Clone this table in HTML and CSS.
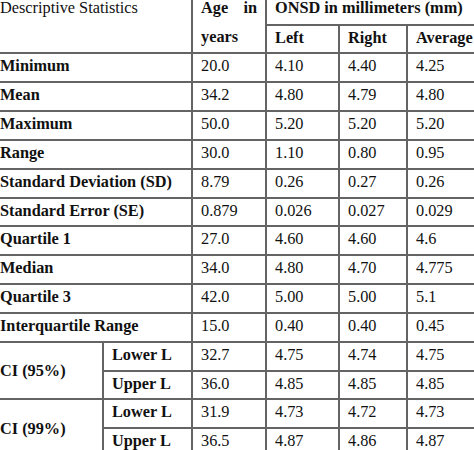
FILE: index.html
```html
<!DOCTYPE html>
<html lang="en">
<head>
<meta charset="utf-8">
<title>Descriptive Statistics</title>
<link rel="stylesheet" href="styles.css">
</head>
<body>
<table class="stats">
  <colgroup>
    <col class="c-label">
    <col class="c-sub">
    <col class="c-age">
    <col class="c-left">
    <col class="c-right">
    <col class="c-avg">
  </colgroup>
  <tr class="head1">
    <th colspan="2" rowspan="2" class="desc">Descriptive Statistics</th>
    <th rowspan="2" class="age"><div class="age-line">Age in</div><div class="age-years">years</div></th>
    <th colspan="3">ONSD in millimeters (mm)</th>
  </tr>
  <tr>
    <th>Left</th><th>Right</th><th>Average</th>
  </tr>
  <tr><th colspan="2">Minimum</th><td>20.0</td><td>4.10</td><td>4.40</td><td>4.25</td></tr>
  <tr><th colspan="2">Mean</th><td>34.2</td><td>4.80</td><td>4.79</td><td>4.80</td></tr>
  <tr><th colspan="2">Maximum</th><td>50.0</td><td>5.20</td><td>5.20</td><td>5.20</td></tr>
  <tr><th colspan="2">Range</th><td>30.0</td><td>1.10</td><td>0.80</td><td>0.95</td></tr>
  <tr><th colspan="2">Standard Deviation (SD)</th><td>8.79</td><td>0.26</td><td>0.27</td><td>0.26</td></tr>
  <tr><th colspan="2">Standard Error (SE)</th><td>0.879</td><td>0.026</td><td>0.027</td><td>0.029</td></tr>
  <tr><th colspan="2">Quartile 1</th><td>27.0</td><td>4.60</td><td>4.60</td><td>4.6</td></tr>
  <tr><th colspan="2">Median</th><td>34.0</td><td>4.80</td><td>4.70</td><td>4.775</td></tr>
  <tr><th colspan="2">Quartile 3</th><td>42.0</td><td>5.00</td><td>5.00</td><td>5.1</td></tr>
  <tr><th colspan="2">Interquartile Range</th><td>15.0</td><td>0.40</td><td>0.40</td><td>0.45</td></tr>
  <tr><th rowspan="2" class="ci">CI (95%)</th><th>Lower L</th><td>32.7</td><td>4.75</td><td>4.74</td><td>4.75</td></tr>
  <tr><th>Upper L</th><td>36.0</td><td>4.85</td><td>4.85</td><td>4.85</td></tr>
  <tr><th rowspan="2" class="ci">CI (99%)</th><th>Lower L</th><td>31.9</td><td>4.73</td><td>4.72</td><td>4.73</td></tr>
  <tr><th>Upper L</th><td>36.5</td><td>4.87</td><td>4.86</td><td>4.87</td></tr>
</table>
</body>
</html>
```

FILE: styles.css
```css
html, body {
  margin: 0;
  padding: 0;
  background: #ffffff;
  overflow: hidden;
}

.stats {
  border-collapse: collapse;
  table-layout: fixed;
  width: 508px;
  margin: -6px 0 0 -10px;
  font-family: "Liberation Serif", "Times New Roman", serif;
  font-size: 16.3px;
  line-height: 23px;
  color: #111111;
}

.c-label { width: 112px; }
.c-sub { width: 89px; }
.c-age { width: 74px; }
.c-left { width: 73px; }
.c-right { width: 68px; }
.c-avg { width: 92px; }

.stats th,
.stats td {
  border: 2px solid #646464;
  padding: 0 8px;
  text-align: left;
  vertical-align: top;
  white-space: nowrap;
}

.stats th {
  font-weight: bold;
}

.stats td {
  font-weight: normal;
}

.stats tr {
  height: 28.85px;
}

.stats tr.head1 {
  height: 29.5px;
}

.stats th.desc {
  font-weight: normal;
}

.stats th.age {
  white-space: normal;
}

.age-line {
  text-align: justify;
  text-align-last: justify;
}

.age-years {
  margin-top: 6px;
}

.stats th.ci {
  vertical-align: middle;
}
```
